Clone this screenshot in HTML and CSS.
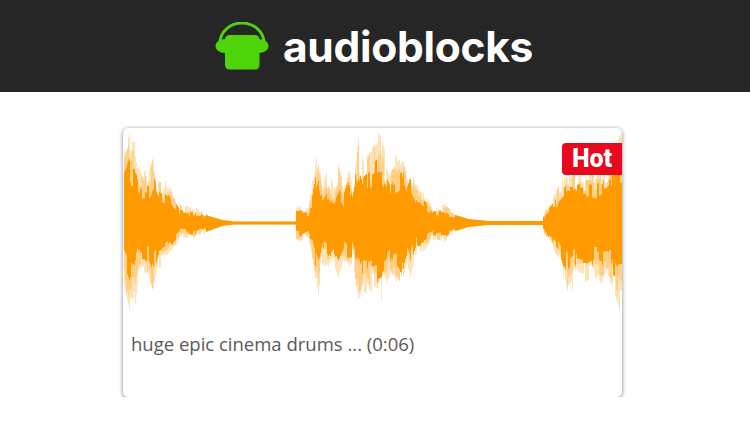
FILE: index.html
```html
<!DOCTYPE html>
<html lang="en">
<head>
    <meta charset="UTF-8">
    <title>audioblocks</title>
    <link rel="stylesheet" href="styles.css">
</head>
<body>
    <header class="site-header">
        <svg class="logo-icon" width="54" height="48" viewBox="0 0 54 48">
            <path d="M5 21A22 20 0 0 1 49 21" fill="none" stroke="#4fd40a" stroke-width="2.8"/>
            <path d="M10 17C5 17 .5 20 .5 24s4.500 7 9.500 7z" fill="#4fd40a"/>
            <path d="M44 17c5 0 9.500 3 9.500 7s-4.500 7-9.500 7z" fill="#4fd40a"/>
            <rect x="10" y="13" width="34.500" height="34.500" rx="4.500" fill="#4fd40a"/>
        </svg>
        <span class="logo-text">audioblocks</span>
    </header>

    <div class="card">
        <canvas class="wave" id="wave" width="498" height="190"></canvas>
        <span class="badge-hot">Hot</span>
        <p class="clip-title">huge epic cinema drums ... (0:06)</p>
    </div>
    <script src="wave.js"></script>
</body>
</html>
```

FILE: styles.css
```css
body {
    margin: 0;
    background: #fff;
    font-family: "Open Sans", "Noto Sans", sans-serif;
}
.site-header {
    height: 92px;
    padding-right: 4px;
    background: #262626;
    display: flex;
    align-items: flex-start;
    justify-content: center;
    gap: 14px;
}
.logo-icon {
    margin-top: 22px;
}
.logo-text {
    width: 248px;
    color: #fff;
    font-family: "Inter", sans-serif;
    font-weight: 700;
    font-size: 42.500px;
    line-height: 48px;
    margin-top: 23px;
    letter-spacing: -0.3px;
    white-space: nowrap;
}
.card {
    position: relative;
    width: 499px;
    height: 269px;
    margin: 36px 0 0 123px;
    border-radius: 5px;
    background: #fff;
    box-shadow: 0 1px 4px rgba(0,0,0,0.5);
    overflow: hidden;
}
.wave {
    display: block;
    margin: 2px 0 0 1px;
    filter: blur(0.7px);
}
.badge-hot {
    position: absolute;
    top: 15px;
    right: 0;
    width: 60px;
    height: 32px;
    background: #e8091e;
    border-radius: 4px 0 0 4px;
    color: #fff;
    font-family: "Roboto", sans-serif;
    font-weight: 900;
    font-size: 25px;
    line-height: 32px;
    text-align: center;
}
.clip-title {
    margin: 12px 0 0 8px;
    color: #5a5a5a;
    font-size: 18.500px;
    line-height: 24px;
}
```

FILE: wave.js
```js
// peak outline of the clip: [x, height above centre, height below centre]
var peaks = [
    [0, 70, 62], [5, 87, 85], [10, 87, 87], [14, 60, 50], [18, 50, 47], [24, 50, 50],
    [29, 68, 68], [34, 46, 44], [41, 41, 38], [46, 36, 30], [52, 25, 22], [56, 17, 13],
    [68, 16, 15], [77, 12, 11], [84, 7, 8], [98, 3, 3], [110, 1.5, 1.5], [171, 1.5, 1.5],
    [172, 17, 17], [184, 14, 15], [188, 40, 36], [194, 77, 77], [198, 38, 40], [204, 55, 50],
    [209, 38, 38], [214, 57, 54], [219, 38, 38], [224, 60, 46], [228, 40, 42], [234, 85, 85],
    [239, 63, 65], [248, 75, 73], [255, 85, 77], [261, 67, 66], [266, 50, 52], [271, 62, 58],
    [278, 72, 72], [283, 47, 44], [286, 60, 55], [291, 37, 33], [301, 28, 26], [308, 15, 16],
    [321, 18, 18], [331, 8, 8], [344, 4, 4], [364, 2, 2], [418, 2, 2], [421, 15, 14],
    [434, 35, 36], [443, 50, 70], [450, 50, 60], [460, 50, 58], [467, 50, 55], [475, 52, 56],
    [483, 58, 60], [490, 72, 70], [496, 90, 88], [498, 88, 88]
];

var canvas = document.getElementById('wave');
var ctx = canvas.getContext('2d');
var centre = 93;

// small repeatable noise, so the clip looks the same on every load
var seed = 7;
function noise() {
    seed = (seed * 16807) % 2147483647;
    return seed / 2147483647;
}

function outline(x, side) {
    for (var i = 1; i < peaks.length; i++) {
        if (x <= peaks[i][0]) {
            var a = peaks[i - 1], b = peaks[i];
            var t = (x - a[0]) / (b[0] - a[0]);
            return a[side] + (b[side] - a[side]) * t;
        }
    }
    return 0;
}

// one pass of spikes, each a few pixels wide
function drawPass(color, low, high, minWidth, quietFull) {
    ctx.fillStyle = color;
    var x = 0;
    while (x < 498) {
        var w = minWidth + Math.floor(noise() * 3);
        var a = low + (high - low) * noise();
        var b = low + (high - low) * noise();
        for (var i = 0; i < w && x < 498; i++, x++) {
            var up = outline(x, 1), down = outline(x, 2);
            if (quietFull && up < 9) {
                ctx.fillRect(x, centre - up, 1, up + down);
            } else {
                ctx.fillRect(x, centre - up * a, 1, up * a + down * b);
            }
        }
    }
}

// faint spikes first, solid body on top
drawPass('rgba(255,154,0,0.28)', 0.6, 1.08, 1, false);
drawPass('rgba(255,154,0,0.28)', 0.55, 1.05, 2, false);
drawPass('#ff9a00', 0.42, 0.8, 1, true);
```
